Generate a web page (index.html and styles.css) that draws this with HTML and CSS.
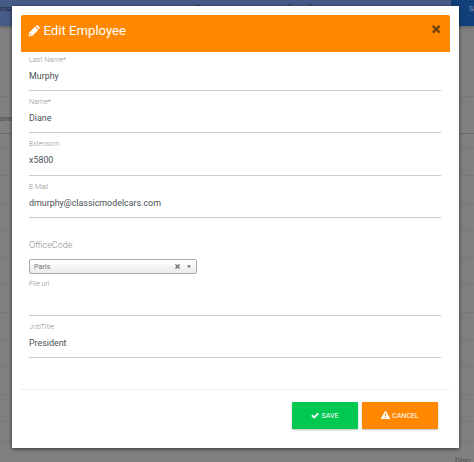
FILE: index.html
```html
<!DOCTYPE html>
<html lang="en">
<head>
<meta charset="utf-8">
<title>Edit Employee</title>
<link rel="stylesheet" href="styles.css">
</head>
<body>
<div class="page">
  <nav class="nav">
    <div class="links"><span>mployee</span><span>Customer</span><span>Orders</span><span>Products</span><span>Offices</span><span>Hi,</span><span>Matteo1 [2151]</span></div>
    <div class="search">S</div>
  </nav>
  <div class="table">
    <div class="row first"></div>
    <div class="row head">ame</div>
    <div class="row filter"></div>
    <div class="row"></div><div class="row"></div><div class="row"></div><div class="row"></div><div class="row"></div><div class="row"></div><div class="row"></div><div class="row"></div><div class="row"></div><div class="row"></div>
    <div class="row last"></div>
    <div class="info">Disp</div>
  </div>
</div>
<div class="modal">
  <header class="header">
    <svg class="pencil" viewBox="0 0 24 24"><path fill="#fff" fill-rule="evenodd" d="M1 23l1.500-8L14 3.500l6.500 6.500L9 21.500zM15.300 2.200L16.700.9q1.400-1.200 2.800 0l3.600 3.600q1.200 1.400 0 2.800L21.800 8.700zM4 17l-.5 2.200 1.500 1.500 2.200-.5z"/></svg>
    <h1>Edit Employee</h1>
    <svg class="close" viewBox="0 0 20 20"><path stroke="#74450d" stroke-width="5.800" d="M2 2l16 16m0-16l-16 16"/></svg>
  </header>
  <div class="body">
    <div class="field"><label>Last Name*</label><div class="value">Murphy</div></div>
    <div class="field"><label>Name*</label><div class="value">Diane</div></div>
    <div class="field"><label>Extension</label><div class="value">x5800</div></div>
    <div class="field"><label>E-Mail</label><div class="value">dmurphy@classicmodelcars.com</div></div>
    <div class="office">OfficeCode</div>
    <div class="select"><span>Paris</span>
      <svg class="clear" viewBox="0 0 10 10"><path stroke="#666" stroke-width="2.400" d="M1 1l8 8m0-8l-8 8"/></svg>
      <svg class="arrow" viewBox="0 0 10 8"><path fill="#777" d="M0 0h10L5 8z"/></svg>
    </div>
    <div class="field"><label>File url</label><div class="value"></div></div>
    <div class="field"><label>JobTitle</label><div class="value">President</div></div>
  </div>
  <footer class="footer">
    <div class="btn save"><svg viewBox="0 0 20 16"><path fill="none" stroke="#fff" stroke-width="4.600" d="M2 7.500l6 5.500L18 2.500"/></svg>SAVE</div>
    <div class="btn cancel"><svg viewBox="0 0 20 18"><path fill="#fff" fill-rule="evenodd" d="M10 0q1 0 1.500 1l8.300 15q.6 2-1.200 2H1.400q-1.800 0-1.200-2L8.500 1Q9 0 10 0zM8.500 5.500l.4 6h2.200l.4-6zM8.700 13v2.500h2.600V13z"/></svg>CANCEL</div>
  </footer>
</div>
</body>
</html>
```
FILE: styles.css
```css
* { box-sizing: border-box; }
body { margin: 0; width: 474px; height: 462px; overflow: hidden; position: relative; font-family: Roboto, "Liberation Sans", sans-serif; background: #808080; }
.nav { height: 26px; display: flex; background: #465b88; box-shadow: 0 1px 3px rgba(0,0,0,.3); font-size: 8px; line-height: 17px; color: #1c2433; }
.links { width: 451px; display: flex; gap: 17px; }
.search { flex: 1; padding-left: 18px; background: #12407a; color: #8193b0; }
.row { height: 27.300px; border-bottom: 1px solid #787878; }
.first { height: 71px; }
.head { height: 37px; padding-top: 16px; font-size: 6.500px; line-height: 12px; color: #484848; border-color: #6a6a6a; }
.filter { height: 15px; }
.last { height: 20px; }
.info { margin-top: 13px; padding-left: 455px; font-size: 8px; line-height: 12px; color: #4b4b4b; }
.modal { position: absolute; left: 12px; top: 6px; width: 446.500px; height: 441.500px; padding: 8.500px 9px 0; background: #fff; box-shadow: 0 1px 4px rgba(0,0,0,.6); color: #4b5156; }
.header { height: 37px; padding: 0 9.500px 5px 7px; display: flex; align-items: center; background: #ff8800; border-radius: 2px 2px 0 0; color: #fff; }
.pencil { width: 12px; height: 12px; margin-right: 3.500px; }
h1 { margin: 0; flex: 1; font-size: 13.150px; line-height: 16px; font-weight: 400; }
.close { width: 8.500px; height: 8.500px; margin-top: -2px; }
.body { height: 337px; padding: 0 8.500px 0 8px; }
.field { height: 42.400px; padding-top: 6px; border-bottom: 1px solid #ccc; }
.field:first-child { height: 39.500px; padding-top: 3px; }
.field label { display: block; font-size: 7.100px; line-height: 10px; color: #8e8e8e; font-weight: 300; }
.value { margin-top: 5px; font-size: 8.900px; line-height: 12px; }
.office { padding-top: 21px; font-size: 9px; line-height: 13px; color: #8e8e8e; font-weight: 300; }
.select { width: 168px; height: 15px; margin: 7px 0 -1px; padding: 0 5px 0 4px; display: flex; align-items: center; border: 1px solid #aaa; border-radius: 2px; background: linear-gradient(#fff 20%, #f4f4f4 50%, #ececec); font-size: 7.200px; color: #777; }
.select span { flex: 1; }
.clear { width: 5px; height: 5px; margin-right: 7px; }
.arrow { width: 4px; height: 3.500px; }
.footer { padding: 12px 11.500px 0 0; border-top: 1px solid #eee; display: flex; justify-content: flex-end; gap: 4px; }
.btn { height: 27px; display: flex; align-items: center; justify-content: center; gap: 2px; border-radius: 1px; box-shadow: 0 1px 2px rgba(0,0,0,.25); color: #fff; font-size: 7.100px; font-weight: 400; }
.save { width: 66px; background: #00c851; }
.save svg { width: 8px; height: 7px; }
.cancel { width: 76px; background: #ff8800; }
.cancel svg { width: 9px; height: 8px; }
```
